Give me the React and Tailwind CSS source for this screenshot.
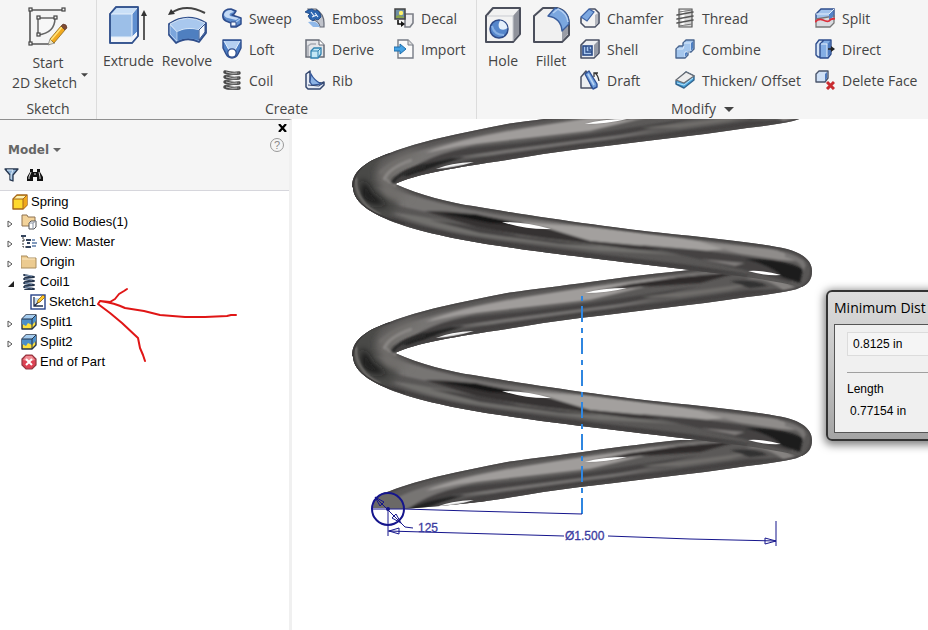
import React, { useState } from 'react';

const icons = {
  sketch: (
    <>
      <path d="M36 4H2V38H22" fill="none" stroke="#555" strokeWidth="1.6" />
      <path d="M10 12H27Q27 27 10 29Z" fill="#f7f7f7" stroke="#666" strokeWidth="1.5" />
      <g fill="#f5f5f5" stroke="#444" strokeWidth="1.2">
        <rect x="1" y="2" width="3" height="3" />
        <rect x="34" y="2" width="3" height="3" />
        <rect x="1" y="36" width="3" height="3" />
        <rect x="9" y="10" width="3" height="3" />
        <rect x="26" y="10" width="3" height="3" />
        <rect x="9" y="27" width="3" height="3" />
      </g>
      <path d="M20 39L22 33L27 37Z" fill="#e9e4c8" stroke="#777" strokeWidth=".7" />
      <path d="M22 33L33 20L37 24L26 37Z" fill="#f1a91e" stroke="#8c6a24" strokeWidth=".8" />
      <path d="M23 34L34 21" stroke="#ffe27a" strokeWidth="1.6" />
      <path d="M33 20L35 18Q39 18 39 22L37 24Z" fill="#7d4a33" stroke="#5b3526" strokeWidth=".6" />
    </>
  ),
  extrude: (
    <>
      <path d="M2 10L8 3H30V32L24 39H2Z" fill="#9cbfe8" stroke="#2c4a86" strokeWidth="1.6" strokeLinejoin="round" />
      <path d="M3 10L9 4H29L24 10Z" fill="#c9dff7" />
      <path d="M24 10L29 4V31L24 38Z" fill="#5f8fd0" />
      <path d="M3 33H24L29 28V32L24 38H3Z" fill="#f3f5f8" />
      <path d="M3 33H24L29 28M24 10V38M3 10H24L29 4" fill="none" stroke="#e6f0fb" strokeWidth="1" />
      <path d="M2 10L8 3H30V32L24 39H2Z" fill="none" stroke="#34548f" strokeWidth="1.4" strokeLinejoin="round" />
      <path d="M36 36V10" stroke="#333" strokeWidth="1.6" />
      <path d="M36 6L39 12H33Z" fill="#333" />
    </>
  ),
  revolve: (
    <>
      <path d="M4 9Q19 -1 38 9" fill="none" stroke="#444" strokeWidth="2" />
      <path d="M1 11L4 5L8 10Z" fill="#333" />
      <path d="M2 20Q20 8 39 19V29L32 38Q20 32 9 39L2 31Z" fill="#7fa9de" stroke="#2f4e8b" strokeWidth="1.8" strokeLinejoin="round" />
      <path d="M3 20Q20 9 38 19L31 26Q20 22 10 28Z" fill="#a9c8ee" stroke="#e6f0fa" strokeWidth=".8" />
      <path d="M10 28Q20 23 31 26V36Q20 32 10 37Z" fill="#4f7fc0" />
      <path d="M32 26L38 20V28L32 36Z" fill="#f5f8fc" stroke="#2f4e8b" strokeWidth="1" />
      <path d="M3 21L10 28V37L3 30Z" fill="#7ba5dc" stroke="#dceafa" strokeWidth=".6" />
    </>
  ),
  hole: (
    <>
      <path d="M3 12L10 4H37V30L30 38H3Z" fill="#f2f2f2" stroke="#4b4f5c" strokeWidth="2" strokeLinejoin="round" />
      <path d="M30 12L36 5V30L30 37Z" fill="#8f929b" />
      <path d="M4 12H30V37" fill="none" stroke="#c9cbd1" strokeWidth="1" />
      <circle cx="16" cy="25" r="9" fill="#5586cb" stroke="#2e4a87" strokeWidth="1.5" />
      <path d="M17 16.500A9 9 0 0 1 24.500 24Q21 27 17 25Q14 22 17 16.500Z" fill="#e4effb" />
      <path d="M9 22Q11 31 21 31" fill="none" stroke="#88b0e4" strokeWidth="2" />
    </>
  ),
  fillet: (
    <>
      <path d="M3 12L12 4H26Q38 7 38 21V31L31 38H3Z" fill="#f1f1f1" stroke="#4b4f5c" strokeWidth="2" strokeLinejoin="round" />
      <path d="M31 26L37 20V30L31 37Z" fill="#9a9da6" />
      <path d="M17 12L24 4Q38 6 38 20L31 27Q30 14 17 12Z" fill="#7ba7df" stroke="#3a5e9e" strokeWidth="1.4" strokeLinejoin="round" />
      <path d="M22 9L27 5Q36 9 37 18" fill="none" stroke="#b3cff2" strokeWidth="1.5" />
    </>
  ),
  sweep: (
    <>
      <path d="M1 6Q2 1 9 1L14 3L12 6L10 7L19 10V16L14 19H9V15L4 13Q0 11 1 6Z" fill="#5e8ccc" stroke="#2e4d8d" strokeWidth="1.5" strokeLinejoin="round" />
      <path d="M2 6Q4 2 9 2L12 4Q6 5 8 8L17 10L14 12L6 10Q2 9 2 6Z" fill="#c4daf5" />
      <path d="M9 14H14V18H9Z" fill="#f4f8fd" stroke="#2e4d8d" strokeWidth="1" />
      <path d="M14 14L18 11" stroke="#a9c8ee" strokeWidth="1.2" />
    </>
  ),
  loft: (
    <>
      <path d="M1 1H19V9L16 15Q14 19 10 19T4 15L1 9Z" fill="#4f80c6" stroke="#2e4d8d" strokeWidth="1.4" strokeLinejoin="round" />
      <path d="M2 2H18L13 11H7Z" fill="#b5d0f1" />
      <path d="M2 2L7 11M18 2L13 11" stroke="#e4effb" />
      <circle cx="10" cy="14" r="4.2" fill="#fff" stroke="#2e4d8d" strokeWidth="1.3" />
    </>
  ),
  coil: (
    <>
      {[2, 7, 12, 17].map((y) => (
        <g key={y}>
          <path d={`M3 ${y}Q10 ${y + 2} 17 ${y + 1}`} stroke="#4a4a4a" strokeWidth="3.4" fill="none" strokeLinecap="round" />
          <path d={`M17 ${y + 1}Q9 ${y + 2} 3 ${y + 4}`} stroke="#666" strokeWidth="2" fill="none" />
          <path d={`M4 ${y}Q10 ${y + 2} 15 ${y + 1}`} stroke="#bbb" strokeWidth="1" fill="none" />
        </g>
      ))}
    </>
  ),
  emboss: (
    <>
      <path d="M3 1H11Q19 6 19 15V19H15Q14 13 8 12Z" fill="#c0c3cb" stroke="#666b77" strokeWidth="1.2" />
      <path d="M0 4L3 2L7 1L10 3L12 2L15 5L16 9L13 12L10 11L8 13L5 11L3 8L5 6Z" fill="#2c66b0" stroke="#17407d" strokeWidth=".8" />
      <path d="M3 14Q12 12 15 19H8Z" fill="#8fb8e9" />
      <path d="M6 4L9 8M10 5L13 9M7 9L12 7" stroke="#e7f0fb" strokeWidth="1.1" />
    </>
  ),
  derive: (
    <>
      <path d="M1 1H14L19 6V18H1Z" fill="#e4e5e8" stroke="#666b75" strokeWidth="1.5" />
      <path d="M14 1V6H19" fill="#fff" stroke="#666b75" />
      <path d="M3 17V7L6 5H11" fill="none" stroke="#a7abb3" strokeWidth="1.5" />
      <path d="M6 12L9 9H16V15L13 19H6Z" fill="#c3e8f6" stroke="#2f82b0" strokeWidth="1.3" />
      <path d="M6 12H13V18M13 12L16 9" fill="none" stroke="#2f82b0" />
    </>
  ),
  rib: (
    <>
      <path d="M1 4L5 1V12L17 13L19 12V15L15 19H3L1 17Z" fill="#e6ebf5" stroke="#33476f" strokeWidth="1.5" strokeLinejoin="round" />
      <path d="M6 4Q9 10 16 14L7 15L5 12Z" fill="#8cb3e5" stroke="#33579b" strokeWidth="1.2" />
      <path d="M3 15L14 16L18 13" stroke="#33476f" fill="none" />
    </>
  ),
  decal: (
    <>
      <path d="M11 6H19V15L16 19H11Z" fill="#ececee" stroke="#7c7f87" strokeWidth="1.6" />
      <rect x="1" y="1" width="10" height="10" fill="#6d8fa5" stroke="#444" strokeWidth="1.5" />
      <circle cx="7" cy="5" r="2.2" fill="#fff36b" />
      <path d="M2 10V8L5 7L10 9V10Z" fill="#8ba34f" />
      <path d="M4 12V16H8" stroke="#111" strokeWidth="1.6" fill="none" />
      <path d="M7 13L11 16L7 19Z" fill="#111" />
    </>
  ),
  import: (
    <>
      <path d="M4 1H14L19 6V19H4Z" fill="#fafafa" stroke="#777c86" strokeWidth="1.4" />
      <path d="M14 1V6H19" fill="#ddd" stroke="#777c86" />
      <path d="M0 8H6V5L12 10L6 15V12H0Z" fill="#46a3e4" stroke="#1c6cab" strokeWidth="1" />
    </>
  ),
  chamfer: (
    <>
      <path d="M1 10L10 1H15L19 5V15L15 19H5L1 15Z" fill="#f3f3f3" stroke="#495064" strokeWidth="1.6" strokeLinejoin="round" />
      <path d="M1 9L9 1L14 4L7 13Z" fill="#7da8e0" stroke="#3c62a5" strokeWidth="1.2" />
      <path d="M15 7L18 5V15L15 18Z" fill="#b4b7bf" />
    </>
  ),
  shell: (
    <>
      <path d="M1 6L6 1H19V14L14 19H1Z" fill="#eceef1" stroke="#495064" strokeWidth="1.6" strokeLinejoin="round" />
      <path d="M14 6L18 2V14L14 18Z" fill="#959aa6" />
      <rect x="3" y="7" width="9" height="9" fill="#a7c6ee" stroke="#294987" strokeWidth="1.6" />
      <path d="M6 7V13H12M9 8V11H11" stroke="#294987" strokeWidth="1.3" fill="none" />
    </>
  ),
  draft: (
    <>
      <path d="M1 7L6 1L12 18H1Z" fill="#eceef1" stroke="#495064" strokeWidth="1.5" strokeLinejoin="round" />
      <path d="M5 4L9 1L17 14V17L13 19Z" fill="#6f9edb" stroke="#2f5196" strokeWidth="1.4" strokeLinejoin="round" />
      <path d="M8 4L14 15" stroke="#b9d3f3" strokeWidth="1.6" />
      <path d="M19 11Q18 5 15 3M14 7V3H18" stroke="#333" strokeWidth="1.3" fill="none" />
    </>
  ),
  thread: (
    <>
      <path d="M4 1H17V19H4Z" fill="#d8d8d8" stroke="#555" strokeWidth="1.2" />
      <path d="M8 2V18" stroke="#fff" strokeWidth="3" />
      <path d="M2 7L18 4M2 11L18 8M2 15L18 12" stroke="#555" strokeWidth="1.6" strokeLinecap="round" />
      <path d="M4 4L17 2M4 18L17 16" stroke="#777" strokeWidth="1" />
    </>
  ),
  combine: (
    <>
      <path d="M8 4L11 1H19V10L16 13H13V16L10 19H1V10L4 7H8Z" fill="#a4c6ed" stroke="#49658f" strokeWidth="1.4" strokeLinejoin="round" />
      <path d="M9 4H16L18 2M16 4V12M2 10H8L9 7M10 18V13H15" fill="none" stroke="#dcebfa" strokeWidth="1" />
      <path d="M16 4L18 2V9L16 12ZM10 14L12 13V15L10 18Z" fill="#4e7fc3" />
    </>
  ),
  thicken: (
    <>
      <path d="M1 11L11 2L19 6V10L9 18L1 14Z" fill="#4aa6de" stroke="#33658f" strokeWidth="1.4" strokeLinejoin="round" />
      <path d="M1 10L11 2L19 6L9 13Z" fill="#ededed" stroke="#6a6d74" strokeWidth="1.2" />
      <path d="M2 13L9 15L18 8" fill="none" stroke="#b9e1f8" />
    </>
  ),
  split: (
    <>
      <path d="M1 6L6 1H19V9L14 12H1Z" fill="#a1c2ec" stroke="#2e4d8d" strokeWidth="1.4" />
      <path d="M1 11L19 8V15L15 19H1Z" fill="#d9dbe0" stroke="#777" strokeWidth="1.3" />
      <path d="M14 6L18 2V9L14 12Z" fill="#5584c8" />
      <path d="M1 6H14L19 1" stroke="#e4effb" fill="none" />
      <path d="M0 14Q4 10 8 12T14 13Q16 10 20 11" stroke="#dc2f3b" strokeWidth="1.8" fill="none" />
    </>
  ),
  direct: (
    <>
      <path d="M1 5L4 1H8V18H3L1 16Z" fill="#d6e4f6" stroke="#2e4d8d" strokeWidth="1.4" />
      <path d="M5 5L9 1H16V15L13 19H5Z" fill="#84aee4" stroke="#2e4d8d" strokeWidth="1.4" strokeLinejoin="round" />
      <path d="M12 6L15 2V15L12 18Z" fill="#4c79bd" />
      <path d="M6 5H12V18" stroke="#e2eefb" fill="none" />
      <path d="M13 10H17" stroke="#222" strokeWidth="1.5" />
      <path d="M16 7L20 10L16 13Z" fill="#222" />
    </>
  ),
  deleteFace: (
    <>
      <path d="M1 4L4 1H13V8L10 12H1Z" fill="#cfe0f6" stroke="#49546b" strokeWidth="1.4" strokeLinejoin="round" />
      <path d="M10 4L12 2V8L10 11Z" fill="#4c78bd" />
      <path d="M12 12L19 19M19 12L12 19" stroke="#c92c30" strokeWidth="3" />
    </>
  ),
};

function Icon({ name, large }) {
  return (
    <svg
      viewBox={large ? '0 0 40 40' : '0 0 20 20'}
      className={large ? 'h-10 w-10 shrink-0' : 'h-5 w-5 shrink-0'}
      aria-hidden="true"
    >
      {icons[name]}
    </svg>
  );
}

function BigButton({ icon, children }) {
  return (
    <button type="button" className="flex flex-col items-center gap-[7px] pt-1 leading-5">
      <Icon name={icon} large />
      <span>{children}</span>
    </button>
  );
}

function ToolColumn({ items, className }) {
  return (
    <div className={`flex shrink-0 flex-col gap-[11px] pt-2 ${className}`}>
      {items.map(([icon, label]) => (
        <button key={icon} type="button" className="flex h-5 items-center gap-[7px] whitespace-nowrap">
          <Icon name={icon} />
          <span>{label}</span>
        </button>
      ))}
    </div>
  );
}

function Caret({ className }) {
  return (
    <svg viewBox="0 0 10 5" className={className} aria-hidden="true">
      <path d="M0 0H10L5 5Z" fill="currentColor" />
    </svg>
  );
}

function Ribbon() {
  return (
    <header className="flex h-[119px] shrink-0 overflow-hidden bg-[#f5f5f5] font-['Open_Sans','Noto_Sans',sans-serif] text-[14px] text-[#444]">
      <section className="flex w-[97px] shrink-0 flex-col justify-between border-r border-[#dcdcdc]">
        <button type="button" className="flex flex-col items-center pt-[6px] leading-5">
          <Icon name="sketch" large />
          <span className="mt-[7px]">Start</span>
          <span className="flex items-center gap-1 pl-1">
            2D Sketch
            <Caret className="mb-4 h-1 w-[7px]" />
          </span>
        </button>
        <h2 className="text-center leading-5">Sketch</h2>
      </section>

      <section className="flex w-[380px] shrink-0 flex-col justify-between border-r border-[#dcdcdc]">
        <div className="flex pl-[6px]">
          <div className="flex w-[119px] shrink-0 gap-2">
            <BigButton icon="extrude">Extrude</BigButton>
            <BigButton icon="revolve">Revolve</BigButton>
          </div>
          <ToolColumn className="w-[83px]" items={[['sweep', 'Sweep'], ['loft', 'Loft'], ['coil', 'Coil']]} />
          <ToolColumn className="w-[89px]" items={[['emboss', 'Emboss'], ['derive', 'Derive'], ['rib', 'Rib']]} />
          <ToolColumn className="w-[80px]" items={[['decal', 'Decal'], ['import', 'Import']]} />
        </div>
        <h2 className="text-center leading-5">Create</h2>
      </section>

      <section className="flex w-[451px] shrink-0 flex-col justify-between">
        <div className="flex pl-[6px]">
          <div className="flex w-[97px] shrink-0 gap-2">
            <BigButton icon="hole">Hole</BigButton>
            <BigButton icon="fillet">Fillet</BigButton>
          </div>
          <ToolColumn className="w-[95px]" items={[['chamfer', 'Chamfer'], ['shell', 'Shell'], ['draft', 'Draft']]} />
          <ToolColumn
            className="w-[140px]"
            items={[['thread', 'Thread'], ['combine', 'Combine'], ['thicken', 'Thicken/ Offset']]}
          />
          <ToolColumn
            className="w-[113px]"
            items={[['split', 'Split'], ['direct', 'Direct'], ['deleteFace', 'Delete Face']]}
          />
        </div>
        <button type="button" className="flex items-center justify-center gap-2 leading-5">
          Modify
          <Caret className="h-[5px] w-[10px]" />
        </button>
      </section>
    </header>
  );
}

const treeIcons = {
  part: (
    <>
      <path d="M1 5L5 1H15V11L11 15H1Z" fill="#ffd92e" stroke="#a5661c" strokeWidth="1.4" strokeLinejoin="round" />
      <path d="M2 5L5 2H14L11 5Z" fill="#fff2b0" />
      <path d="M11 5L15 1V11L11 15Z" fill="#f0a81c" />
      <path d="M1 5H11V15M11 5L15 1" fill="none" stroke="#a5661c" />
    </>
  ),
  bodies: (
    <>
      <path d="M1 1H6L7 3H14V12H1Z" fill="#f3d39a" stroke="#8f7350" />
      <path d="M8 9L10 7H15V13L13 15H8Z" fill="#fff" stroke="#555" strokeLinejoin="round" />
      <path d="M8 9H12L15 7M12 9V15" fill="none" stroke="#8b95a5" />
    </>
  ),
  view: (
    <>
      <path d="M2 3V13H5M2 6H5M8 6H11M8 13H11" stroke="#333" fill="none" strokeDasharray="2 1" />
      <path d="M0 2H5M5 6H10M6 9H9M5 13H10" stroke="#34445e" strokeWidth="2" />
      <path d="M11 9H16M11 6H14M11 12H15" stroke="#5b7ba8" strokeWidth="1.5" />
    </>
  ),
  folder: (
    <>
      <path d="M0 2H6L7 4H15V14H0Z" fill="#eccb90" stroke="#a98c5c" />
      <path d="M1 5H14" stroke="#fbe8c3" />
    </>
  ),
  coil: (
    <>
      {[1, 5, 9, 13].map((y) => (
        <path
          key={y}
          d={`M3 ${y}L13 ${y + 2}L4 ${y + 3}`}
          stroke="#26364e"
          strokeWidth="1.8"
          fill="none"
          strokeLinecap="round"
          strokeLinejoin="round"
        />
      ))}
      {[1, 5, 9, 13].map((y) => (
        <path key={y} d={`M4 ${y}L11 ${y + 1}`} stroke="#9db6d4" strokeWidth=".8" />
      ))}
    </>
  ),
  sketch: (
    <>
      <rect x="1" y="1" width="14" height="14" fill="#fff" stroke="#27438a" strokeWidth="1.4" />
      <path d="M4 3V12H13M4 12L11 6" stroke="#22304e" strokeWidth="1.3" fill="none" />
      <path d="M5 4H10L5 10Z" fill="#c4def5" />
      <path d="M7 9L8 6L13 1L15 3L10 8Z" fill="#ffc928" stroke="#8a6118" strokeWidth=".8" />
    </>
  ),
  split: (
    <>
      <path d="M1 5L5 1H15V11L11 15H1Z" fill="#ffe13b" stroke="#25344a" strokeWidth="1.4" strokeLinejoin="round" />
      <path d="M1 5L5 1H15L11 5Z" fill="#a5ccef" />
      <path d="M1 5H11L15 1V7L11 11L7 9L5 12L1 10Z" fill="#4d8fc8" />
      <path d="M1 5H11V15M11 5L15 1" fill="none" stroke="#25344a" />
    </>
  ),
  end: (
    <>
      <path d="M5 1H11L15 5V11L11 15H5L1 11V5Z" fill="#dc4253" stroke="#8f3942" strokeWidth="1.2" />
      <path d="M5 2H11L14 6Q8 8 2 6Z" fill="#ef8c94" />
      <path d="M5 5L11 11M11 5L5 11" stroke="#fff" strokeWidth="2" />
    </>
  ),
};

const tree = [
  { name: 'Spring', icon: 'part', indent: 'pl-3' },
  { name: 'Solid Bodies(1)', icon: 'bodies', indent: 'pl-[7px]', toggle: 'closed' },
  { name: 'View: Master', icon: 'view', indent: 'pl-[7px]', toggle: 'closed' },
  { name: 'Origin', icon: 'folder', indent: 'pl-[7px]', toggle: 'closed' },
  { name: 'Coil1', icon: 'coil', indent: 'pl-[7px]', toggle: 'open' },
  { name: 'Sketch1', icon: 'sketch', indent: 'pl-[30px]' },
  { name: 'Split1', icon: 'split', indent: 'pl-[7px]', toggle: 'closed' },
  { name: 'Split2', icon: 'split', indent: 'pl-[7px]', toggle: 'closed' },
  { name: 'End of Part', icon: 'end', indent: 'pl-[21px]' },
];

function ModelBrowser() {
  return (
    <aside className="relative flex w-[292px] shrink-0 flex-col border-t border-r-3 border-t-[#8f8f8f] border-r-[#f0f0f0] bg-white font-['Liberation_Sans',Arial,sans-serif] text-[13px] text-black">
      <div className="flex h-[71px] justify-between border-b border-[#d6d6dc] bg-[#f5f5f5]">
        <div className="flex flex-col gap-2 pt-5 pl-1">
          <button
            type="button"
            className="flex items-center gap-1 pl-1 font-['DejaVu_Sans',Verdana,sans-serif] text-[12px] leading-5 font-bold text-[#666]"
          >
            Model
            <Caret className="h-1 w-2" />
          </button>
          <div className="flex gap-2">
            <button type="button" aria-label="Filter">
              <svg viewBox="0 0 15 14" className="h-[14px] w-[15px]">
                <path d="M1 1H14L9 7V13L6 12V7Z" fill="#8fb3d6" stroke="#26364e" strokeWidth="1.3" strokeLinejoin="round" />
                <path d="M3 2H9L7 7V11" fill="none" stroke="#d9e9f7" />
              </svg>
            </button>
            <button type="button" aria-label="Find">
              <svg viewBox="0 0 16 14" className="h-[14px] w-4">
                <path d="M3 1H6V4H10V1H13V4L16 9V13H10V9H6V13H0V9L3 4Z" fill="#111" />
                <path d="M4 4L2 9V11M12 4L13 9V11M7 6H9" stroke="#ddd" fill="none" />
              </svg>
            </button>
          </div>
        </div>
        <div className="flex flex-col items-end gap-[6px] pt-1">
          <button type="button" aria-label="Close" className="pr-[2px]">
            <svg viewBox="0 0 9 8" className="h-2 w-[9px]">
              <path d="M1 0L8 8M8 0L1 8" stroke="#000" strokeWidth="2.2" />
            </svg>
          </button>
          <button
            type="button"
            className="mr-[5px] h-[14px] w-[14px] rounded-full border border-[#999] text-center text-[11px] leading-3 text-[#888]"
          >
            ?
          </button>
        </div>
      </div>

      <ul className="pt-px">
        {tree.map((node) => (
          <li key={node.name} className={`flex h-5 items-center ${node.indent}`}>
            {node.toggle && (
              <button type="button" aria-label={`Toggle ${node.name}`} className="w-[14px] pt-1">
                <svg viewBox="0 0 7 8" className="h-2 w-[7px]">
                  {node.toggle === 'open' ? (
                    <path d="M7 1V7H1Z" fill="#222" />
                  ) : (
                    <path d="M1 1V7L5 4Z" fill="#fff" stroke="#555" />
                  )}
                </svg>
              </button>
            )}
            <svg viewBox="0 0 16 16" className="h-4 w-4" aria-hidden="true">
              {treeIcons[node.icon]}
            </svg>
            <span className="pl-[3px]">{node.name}</span>
          </li>
        ))}
      </ul>

      {/* red pen marks pointing at Sketch1 */}
      <svg viewBox="0 0 150 80" className="pointer-events-none absolute top-[165px] left-[95px] h-20 w-[150px]">
        <path
          d="M32 4L29 6L24 9L20 14L15 17L5 16Q20 18 30 23L49 26L65 30L90 32L110 32L132 31L136 30H141M3 19L5 16M3 19L15 28L27 38L43 53L45 63L48 70L50 76"
          fill="none"
          stroke="#e01616"
          strokeWidth="2"
          strokeLinecap="round"
          strokeLinejoin="round"
        />
      </svg>
    </aside>
  );
}

const REAR =
  'M352 356C352 338 370 329 390 322C405 316 423 311 440 307C462 302 485 297 507 293C535 289 560 286 590 282C625 277 660 273 690 270L747 262L805 266L811 276C808 284 802 288 793 290C780 293 765 295 747 297C720 301 690 305 663 308C635 311 610 315 580 318C555 321 530 325 507 329C480 333 460 336 440 340C420 344 405 348 395 353L380 366Z';

const FRONT =
  'M395 184C420 195 450 203 473 206C530 216 620 229 663 233C710 238 760 243 787 249C805 254 812 262 812 271C812 280 808 284 802 287C785 283 765 280 747 277L690 270C650 265 560 255 507 247C470 242 430 234 405 226C375 216 353 204 353 187L372 180Z';

function CoilDefs() {
  return (
    <defs>
      <filter id="soft" x="-20%" y="-20%" width="140%" height="140%">
        <feGaussianBlur stdDeviation="1.3" />
      </filter>
      <filter id="softer" filterUnits="userSpaceOnUse" x="330" y="100" width="160" height="160">
        <feGaussianBlur stdDeviation="3.5" />
      </filter>
      <clipPath id="rearClip">
        <path d={REAR} />
      </clipPath>
      <clipPath id="frontClip">
        <path d={FRONT} />
      </clipPath>
      <clipPath id="lastTurn">
        <path d="M387 440H830V520H480L480 502L440 506L404 509H387Z" />
      </clipPath>

      <g id="rear">
        <path d={REAR} fill="#5b5958" />
        <g clipPath="url(#rearClip)">
          <g filter="url(#soft)">
            <path d="M378 342C400 320 450 310 507 299L590 287L690 273L740 270L660 284L590 294L500 308C450 318 420 330 398 346Z" fill="#777473" />
            <path d="M425 322C460 307 520 298 590 287L650 279L700 275L640 288L590 300L520 308L460 315C445 318 430 321 425 322Z" fill="#a09d9b" />
            <path d="M396 352C410 334 440 320 470 317L520 312L590 303L700 286L600 309L500 320C450 327 415 340 396 352Z" fill="#454343" />
            <path d="M402 343C420 332 440 330 475 323L440 334L408 346Z" fill="#222" />
            <path d="M450 327L520 317L590 308L660 299L580 314L500 324Z" fill="#777473" />
            <path d="M395 356C440 339 500 328 580 317L663 307L747 296L795 289L747 290L663 302L580 312L500 323Q440 332 395 350Z" fill="#454343" />
            <path d="M587 293L630 284L680 277L740 272L700 283L640 287Z" fill="#2d2b2b" />
            <path d="M640 297L700 290L760 282L730 290L680 297Z" fill="#6f6d6b" />
            <path d="M746 279Q766 277 784 291L796 288Q778 277 760 275Z" fill="#858280" />
            <path d="M730 281Q754 279 768 286L750 288Z" fill="#333131" />
          </g>
          <path d="M436 338Q450 332 474 331Q455 337 436 338ZM585 293Q602 288 627 288Q607 293 585 293Z" fill="#fff" />
          <path d={REAR} fill="none" stroke="#444242" strokeWidth="3" filter="url(#soft)" />
        </g>
      </g>

      <g id="front">
        <path d={FRONT} fill="#595756" />
        <g clipPath="url(#frontClip)">
          <g filter="url(#soft)">
            <path d="M372 186C400 190 440 206 500 215L590 226L690 239L780 250L760 256L690 249L590 237L500 223C450 217 400 208 372 198Z" fill="#777473" />
            <path d="M520 222L590 227L680 238L740 248L700 251L640 247L590 241L550 232Z" fill="#a3a09e" />
            <path d="M425 211C460 210 500 219 550 229L590 241L700 251L620 249L560 242L480 228Z" fill="#343232" />
            <path d="M440 213L475 214L530 226L490 223Z" fill="#161515" />
            <path d="M390 212C430 216 500 234 560 240L680 255L600 251L500 239Q430 230 390 212Z" fill="#716f6d" />
            <path d="M430 220Q480 226 520 236L600 246L560 244L480 233Z" fill="#454343" />
            <path d="M362 202C390 222 450 234 507 242L590 253L690 265L760 276L690 271L590 259L507 248Q400 234 362 202Z" fill="#424040" />
            <path d="M640 245L700 250L760 259L800 270L790 282L740 269L690 257Z" fill="#454343" />
            <path d="M700 242L770 249Q795 254 805 262L780 260L740 254Z" fill="#8f8c8a" />
            <path d="M745 259Q782 258 803 269L800 283L782 277Q775 267 745 259Z" fill="#1f1e1e" />
            <path d="M700 259L745 263L735 266Z" fill="#807d7c" />
            <path d="M785 257Q803 262 803 272L806 265Q800 255 785 253Z" fill="#777473" />
          </g>
          <path d="M502 222Q525 222 551 229Q526 230 502 222ZM748 271Q765 270 781 275Q765 276 748 271Z" fill="#fff" />
          <path
            d="M395 184C420 195 450 203 473 206C530 216 620 229 663 233C710 238 760 243 787 249C805 254 812 262 812 271C812 280 808 284 802 287M747 277L690 270C650 265 560 255 507 247C470 242 430 234 405 226C375 216 353 204 353 187"
            fill="none"
            stroke="#444242"
            strokeWidth="3"
            filter="url(#soft)"
          />
        </g>
      </g>

      {/* shading that ties the two strands together on the left bend */}
      <clipPath id="bendClip">
        <path d={REAR} transform="translate(0 -169)" />
        <path d={FRONT} />
      </clipPath>
      <g id="bend" clipPath="url(#bendClip)" fill="none">
        <path d="M350 160L385 150Q372 168 376 184L400 204L385 222L350 208Z" fill="#4a4847" filter="url(#softer)" />
        <path d="M377 174Q384 161 410 151L425 149L400 166L392 184L412 198L385 198Z" fill="#6f6d6b" filter="url(#softer)" />
        <path d="M361 180Q367 182 372 194L388 205Q370 207 362 197Z" fill="#181717" filter="url(#softer)" />
        <path d="M356 178Q355 202 380 215" stroke="#7b7876" strokeWidth="2" filter="url(#soft)" />
        <path d="M384 180Q388 168 412 160" stroke="#8b8886" strokeWidth="3" filter="url(#soft)" />
        <path d="M392 184Q398 172 425 166" stroke="#2c2a2a" strokeWidth="4" filter="url(#soft)" />
        <path d="M385 178Q389 183 396 186" stroke="#8b8886" strokeWidth="2" filter="url(#soft)" />
        <path d="M405 224C375 216 353 204 353 187Q353 163 390 153" stroke="#3c3a3a" strokeWidth="2" />
      </g>
    </defs>
  );
}

function Viewport() {
  return (
    <svg viewBox="292 119 636 511" className="block h-auto w-full" role="img" aria-label="Spring model">
      <CoilDefs />
      <use href="#rear" y="-169" />
      <use href="#rear" />
      <g clipPath="url(#lastTurn)">
        <use href="#rear" y="169" />
      </g>
      <use href="#front" />
      <use href="#front" y="169" />
      <use href="#bend" />
      <use href="#bend" y="169" />

      {/* coil axis */}
      <path d="M582 296V515" stroke="#2f86e0" strokeWidth="2" strokeDasharray="5 5 16 6" />

      {/* profile and dimensions */}
      <path d="M373 508A15 16 0 0 1 403 508Z" fill="#6b6967" />
      <g fill="none" stroke="#15158c">
        <circle cx="388" cy="509" r="16" strokeWidth="2" />
        <path d="M372 509H404L470 511L582 514M388 509V536M375 497L405 527L413 528M388 531L564 536M608 536L690 539L776 541M776 521V546" />
        <path d="M389 531L399 528V534ZM776 541L765 538V544Z" />
        <path d="M375 497L384 502L380 506ZM401 523L392 518L396 514Z" />
      </g>
      <circle cx="388" cy="509" r="2" fill="#15158c" />
      <g fill="#3b3ba0" stroke="#3b3ba0" strokeWidth=".3" fontFamily="Liberation Sans, Arial, sans-serif" fontSize="12">
        <text x="418" y="532">125</text>
        <text x="565" y="540">Ø1.500</text>
      </g>
    </svg>
  );
}

function DistanceDialog() {
  const [distance, setDistance] = useState('0.8125 in');

  return (
    <div className="absolute top-[171px] -right-6 w-[126px] rounded-md border-2 border-[#333] bg-linear-to-b from-[#dcdcdc] via-[#c4c4c4] to-[#a4a4a4] p-[6px] pt-0 font-['Liberation_Sans',Arial,sans-serif] text-[12px] text-black shadow-[0_2px_9px_2px_rgba(0,0,0,0.5)]">
      <h2 className="font-['Open_Sans','Noto_Sans',sans-serif] text-[14px] leading-8 whitespace-nowrap">
        Minimum Dist
      </h2>
      <div className="flex h-[109px] flex-col border border-[#555] bg-[#f0f0f0] pt-[7px] pl-3">
        <input
          type="text"
          aria-label="Minimum distance"
          className="h-6 w-full border border-[#dcdcdc] bg-[#f5f5f5] pl-[5px]"
          value={distance}
          onChange={(e) => setDistance(e.target.value)}
        />
        <hr className="mt-4 border-[#a0a0a0]" />
        <dl className="pt-1">
          <dt className="leading-6">Length</dt>
          <dd className="pl-[3px] leading-5">0.77154 in</dd>
        </dl>
      </div>
    </div>
  );
}

function App() {
  return (
    <div className="flex min-h-screen flex-col bg-white">
      <Ribbon />
      <div className="flex flex-1">
        <ModelBrowser />
        <main className="relative min-w-0 flex-1 overflow-hidden">
          <Viewport />
          <DistanceDialog />
        </main>
      </div>
    </div>
  );
}

export default App;
